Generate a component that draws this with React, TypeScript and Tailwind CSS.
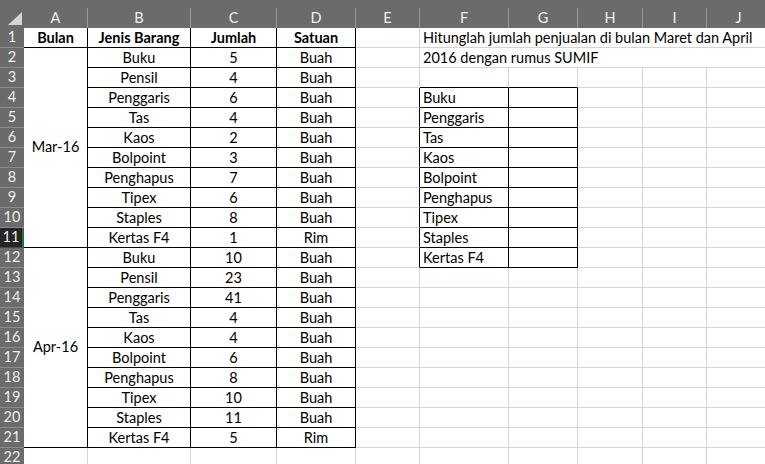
import React from "react";

const COLS = ["A", "B", "C", "D", "E", "F", "G", "H", "I", "J"];

const mar = [
  ["Buku", "5", "Buah"],
  ["Pensil", "4", "Buah"],
  ["Penggaris", "6", "Buah"],
  ["Tas", "4", "Buah"],
  ["Kaos", "2", "Buah"],
  ["Bolpoint", "3", "Buah"],
  ["Penghapus", "7", "Buah"],
  ["Tipex", "6", "Buah"],
  ["Staples", "8", "Buah"],
  ["Kertas F4", "1", "Rim"],
];

const apr = [
  ["Buku", "10", "Buah"],
  ["Pensil", "23", "Buah"],
  ["Penggaris", "41", "Buah"],
  ["Tas", "4", "Buah"],
  ["Kaos", "4", "Buah"],
  ["Bolpoint", "6", "Buah"],
  ["Penghapus", "8", "Buah"],
  ["Tipex", "10", "Buah"],
  ["Staples", "11", "Buah"],
  ["Kertas F4", "5", "Rim"],
];

const lookup = ["Buku", "Penggaris", "Tas", "Kaos", "Bolpoint", "Penghapus", "Tipex", "Staples", "Kertas F4"];

// col: 1..10 (A..J), row: 1..22
function borders(row: number, col: number) {
  const inData = col <= 4 && row <= 21;
  const inLookup = (col === 6 || col === 7) && row >= 4 && row <= 12;
  const rightBlack = inData || inLookup || (col === 5 && row >= 4 && row <= 12);
  const bottomBlack = inData || inLookup || ((col === 6 || col === 7) && row === 3);
  return [
    rightBlack ? "border-r-black" : "border-r-[#d4d4d4]",
    bottomBlack ? "border-b-black" : "border-b-[#d4d4d4]",
  ].join(" ");
}

function Cell({
  row,
  col,
  children,
  align = "center",
  bold = false,
}: {
  row: number;
  col: number;
  children?: React.ReactNode;
  align?: "center" | "left";
  bold?: boolean;
}) {
  return (
    <div
      className={`flex items-center border-r border-b whitespace-nowrap overflow-visible pt-[1px] ${borders(row, col)} ${
        align === "center" ? "justify-center" : "justify-start pl-[3px]"
      } ${bold ? "font-bold" : ""}`}
    >
      {children}
    </div>
  );
}

function RowHead({ n }: { n: number }) {
  const sel = n === 11;
  return (
    <div
      className={`flex items-center justify-center border-b text-[#eeeeee] ${
        sel ? "bg-[#262626] border-b-[#4a4a4a] border-r-2 border-r-[#217346]" : "bg-[#6b6b6b] border-b-[#8c8c8c]"
      }`}
    >
      {n}
    </div>
  );
}

export default function App() {
  const cells: React.ReactNode[] = [];

  // column header row
  cells.push(
    <div key="corner" className="bg-[#6b6b6b] relative">
      <svg width="24" height="28" className="absolute left-0 top-0">
        <polygon points="22,12 22,25 8,25" fill="#d6d6d6" />
      </svg>
    </div>
  );
  COLS.forEach((c) =>
    cells.push(
      <div key={c} className="bg-[#6b6b6b] flex flex-col">
        <div className="h-[8px]" />
        <div className="flex-1 flex items-center justify-center border-r border-r-[#9a9a9a] text-[#eeeeee] pt-[1px]">
          {c}
        </div>
      </div>
    )
  );

  // row 1
  cells.push(<RowHead key="r1" n={1} />);
  ["Bulan", "Jenis Barang", "Jumlah", "Satuan"].forEach((t, i) =>
    cells.push(
      <Cell key={`h${i}`} row={1} col={i + 1} bold>
        {t}
      </Cell>
    )
  );
  cells.push(<Cell key="1e" row={1} col={5} />);
  cells.push(
    <div key="1f" className="col-span-5 flex items-center border-b border-b-[#d4d4d4] pl-[3px] pt-[1px] whitespace-nowrap">
      Hitunglah jumlah penjualan di bulan Maret dan April
    </div>
  );

  for (let r = 2; r <= 22; r++) {
    cells.push(<RowHead key={`r${r}`} n={r} />);
    if (r === 2 || r === 12) {
      cells.push(
        <div
          key={`m${r}`}
          className="row-span-10 flex items-center justify-center border-r border-b border-r-black border-b-black"
        >
          {r === 2 ? "Mar-16" : "Apr-16"}
        </div>
      );
    } else if (r === 22) {
      cells.push(<Cell key="22a" row={22} col={1} />);
    }
    if (r <= 21) {
      const d = r <= 11 ? mar[r - 2] : apr[r - 12];
      d.forEach((t, i) =>
        cells.push(
          <Cell key={`${r}-${i}`} row={r} col={i + 2}>
            {t}
          </Cell>
        )
      );
    } else {
      [2, 3, 4].forEach((c) => cells.push(<Cell key={`${r}-${c}`} row={r} col={c} />));
    }
    cells.push(<Cell key={`${r}e`} row={r} col={5} />);
    if (r === 2) {
      cells.push(
        <div key="2f" className="col-span-5 flex items-center border-b border-b-[#d4d4d4] pl-[3px] pt-[1px] whitespace-nowrap">
          2016 dengan rumus SUMIF
        </div>
      );
    } else {
      cells.push(
        <Cell key={`${r}f`} row={r} col={6} align="left">
          {r >= 4 && r <= 12 ? lookup[r - 4] : null}
        </Cell>
      );
      [7, 8, 9, 10].forEach((c) => cells.push(<Cell key={`${r}-${c}`} row={r} col={c} />));
    }
  }

  return (
    <div className="w-[765px] h-[464px] overflow-hidden bg-white text-black text-[14.5px] leading-none font-['Lato',sans-serif]">
      <div className="grid grid-cols-[24px_64px_103px_86px_79px_64px_89px_69px_65px_64px_64px] grid-rows-[28px_repeat(22,20px)] w-[771px]">
        {cells}
      </div>
    </div>
  );
}
